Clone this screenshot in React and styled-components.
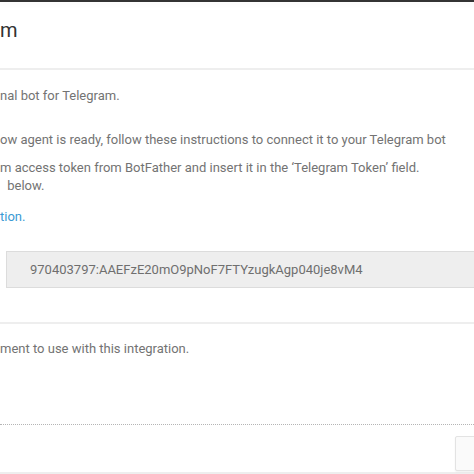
import React from 'react';
import styled, { createGlobalStyle } from 'styled-components';

const GlobalStyle = createGlobalStyle`
  html, body {
    margin: 0;
    padding: 0;
    background: #ffffff;
    overflow: hidden;
  }
  body {
    font-family: Roboto, 'Liberation Sans', Arial, sans-serif;
  }
`;

const Dialog = styled.div`
  width: 560px;
  height: 474px;
  display: flex;
  flex-direction: column;
  background: #fff;
`;

const TopBar = styled.div`
  height: 2px;
  background: #333;
  box-shadow: 0 3px 4px rgba(0, 0, 0, 0.04);
`;

const Header = styled.div`
  height: 50px;
  padding-top: 16px;
  border-bottom: 2px solid #eeeeee;
`;

const Title = styled.h2`
  margin: 0;
  font-size: 20px;
  line-height: 24px;
  font-weight: 400;
  color: #333;
`;

const Section = styled.div`
  padding: ${(p) => p.$pad};
  border-bottom: ${(p) => (p.$divider ? '2px solid #eeeeee' : 'none')};
`;

const Text = styled.p`
  margin: ${(p) => p.$mt || 0}px 0 0 ${(p) => p.$indent || 0}px;
  font-size: 13px;
  line-height: 18px;
  color: ${(p) => (p.$link ? '#3a9ad3' : '#737373')};
  white-space: nowrap;
`;

const TokenInput = styled.div`
  margin: 25px 0 0 6px;
  width: 540px;
  height: 35px;
  box-sizing: content-box;
  background: #eeeeee;
  border: 1px solid #dcdcdc;
  display: flex;
  align-items: center;
  padding-left: 23px;
  font-size: 13px;
  color: #6f6f6f;
`;

const Spacer = styled.div`
  flex: 1;
`;

const Footer = styled.div`
  border-top: 1px dotted #b5b5b5;
  border-bottom: 2px solid #eeeeee;
  height: 47px;
  display: flex;
  justify-content: flex-end;
  align-items: flex-start;
  padding-right: 16px;
`;

const FooterButton = styled.div`
  margin-top: 11px;
  width: 87px;
  height: 33px;
  border: 1px solid #e3e3e3;
  border-radius: 2px;
  background: #fafafa;
  box-shadow: 0 1px 2px rgba(0, 0, 0, 0.06);
`;

export default function App() {
  return (
    <>
      <GlobalStyle />
      <Dialog>
        <TopBar />
        <Header>
          <Title>m</Title>
        </Header>
        <Section $pad="17px 0 34px 0" $divider>
          <Text>nal bot for Telegram.</Text>
          <Text $mt={26}>
            ow agent is ready, follow these instructions to connect it to your Telegram bot
          </Text>
          <Text $mt={10}>
            m access token from BotFather and insert it in the ‘Telegram Token’ field.
          </Text>
          <Text $indent={4}>&nbsp;below.</Text>
          <Text $mt={13} $link>tion.</Text>
          <TokenInput>970403797:AAEFzE20mO9pNoF7FTYzugkAgp040je8vM4</TokenInput>
        </Section>
        <Section $pad="16px 0 0 0">
          <Text>ment to use with this integration.</Text>
        </Section>
        <Spacer />
        <Footer>
          <FooterButton />
        </Footer>
      </Dialog>
    </>
  );
}
